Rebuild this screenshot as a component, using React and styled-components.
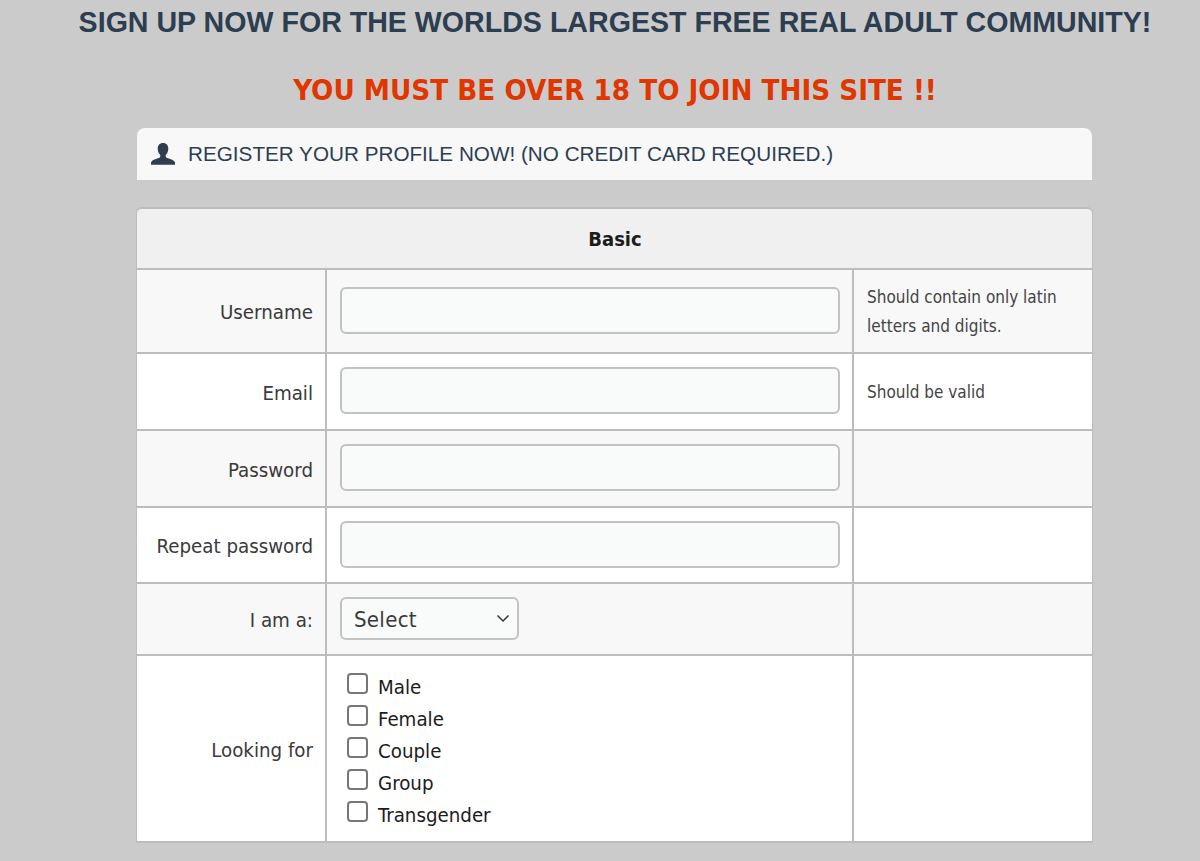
import React from "react";
import styled, { createGlobalStyle } from "styled-components";

const GlobalStyle = createGlobalStyle`
  html, body {
    margin: 0;
    padding: 0;
    background: #cbcbcb;
    height: 861px;
    overflow: hidden;
    font-family: "DejaVu Sans", Tahoma, sans-serif;
    font-stretch: condensed;
  }
`;

const Page = styled.div`
  width: 1200px;
  height: 861px;
  overflow: hidden;
`;

const Headline = styled.h1`
  margin: 0;
  height: 45px;
  padding-left: 30px;
  text-align: center;
  font-family: "Liberation Sans", Arial, sans-serif;
  font-stretch: normal;
  font-size: 28.6px;
  line-height: 45px;
  font-weight: 700;
  color: #2c3e50;
  white-space: nowrap;
`;

const Warning = styled.h2`
  margin: 23px 0 0;
  height: 45px;
  padding-left: 30px;
  text-align: center;
  font-size: 29.2px;
  line-height: 45px;
  font-weight: 700;
  color: #e03600;
  white-space: nowrap;
`;

const Content = styled.div`
  width: 957px;
  margin: 15px 0 0 136px;
`;

const Banner = styled.div`
  display: flex;
  align-items: center;
  gap: 13px;
  box-sizing: border-box;
  height: 52px;
  margin: 0 1px;
  padding: 0 0 0 14px;
  background: #f8f8f8;
  border-radius: 8px 8px 0 0;
  font-family: "Liberation Sans", Arial, sans-serif;
  font-stretch: normal;
  font-size: 20.7px;
  color: #2c3e50;
`;

const UserIcon = styled.svg`
  width: 24px;
  height: 22px;
  fill: #2c3e50;
  flex: none;
`;

const FormTable = styled.table`
  width: 957px;
  margin-top: 27px;
  border-collapse: separate;
  border-spacing: 0;
  table-layout: fixed;
  border: 2px solid #bdbdbd;
  border-width: 2px 1px;
  border-radius: 6px 6px 0 0;
  overflow: hidden;
  box-sizing: border-box;
  color: #3a3a3a;
`;

const HeadCell = styled.th`
  height: 59px;
  padding: 0 0 0 1px;
  background: #f0f0f0;
  border-bottom: 2px solid #bdbdbd;
  font-size: 20px;
  font-weight: 700;
  color: #1c1c1c;
`;

const Row = styled.tr`
  background: ${(p) => (p.$shaded ? "#f8f8f8" : "#ffffff")};
`;

const Cell = styled.td`
  box-sizing: border-box;
  padding: 0 12px 0 13px;
  height: ${(p) => p.$h}px;
  border-right: 2px solid #bdbdbd;
  border-bottom: 2px solid #bdbdbd;
  vertical-align: middle;

  &:last-child {
    border-right: 0;
  }

  tr:last-child & {
    border-bottom: 0;
  }
`;

const LabelCell = styled(Cell)`
  padding-top: 2px;
  text-align: right;
  font-size: 20.3px;
`;

const HintCell = styled(Cell)`
  padding-top: 2px;
  font-size: 17px;
  line-height: 29px;
  color: #444444;
`;

const TextInput = styled.input`
  display: block;
  box-sizing: border-box;
  width: 100%;
  height: 47px;
  margin-bottom: 2px;
  background: #f9fafa;
  border: 2px solid #c2c2c2;
  border-radius: 6px;
`;

const SelectBox = styled.select`
  display: block;
  box-sizing: border-box;
  width: 179px;
  height: 43px;
  margin-bottom: 2px;
  padding: 2px 40px 0 12px;
  background: #f9fafa url("data:image/svg+xml,%3Csvg xmlns='http://www.w3.org/2000/svg' viewBox='0 0 14 14'%3E%3Cpath d='M1.5 4.5 7 10l5.500-5.500' fill='none' stroke='%23333' stroke-width='1.500'/%3E%3C/svg%3E") no-repeat right 7px center / 14px;
  appearance: none;
  border: 2px solid #c2c2c2;
  border-radius: 6px;
  font-family: inherit;
  font-stretch: inherit;
  font-size: 22px;
  letter-spacing: 0.3px;
  color: #3a3a3a;
`;

const CheckList = styled.div`
  display: flex;
  flex-direction: column;
  padding-left: 7px;
`;

const CheckRow = styled.label`
  display: flex;
  align-items: center;
  gap: 10px;
  height: 32px;
  font-size: 20.3px;
  color: #1c1c1c;
`;

const CheckLabel = styled.span`
  padding-top: 4px;
`;

const CheckBox = styled.span`
  display: block;
  box-sizing: border-box;
  width: 21px;
  height: 21px;
  margin-top: -2px;
  background: #fff;
  border: 2px solid #777;
  border-radius: 4px;
`;

const looking = ["Male", "Female", "Couple", "Group", "Transgender"];

export default function App() {
  return (
    <Page>
      <GlobalStyle />
      <Headline>SIGN UP NOW FOR THE WORLDS LARGEST FREE REAL ADULT COMMUNITY!</Headline>
      <Warning>YOU MUST BE OVER 18 TO JOIN THIS SITE !!</Warning>
      <Content>
        <Banner>
          <UserIcon viewBox="0 0 24 22">
            <path d="M12 0c3.400 0 5.300 2.400 5.300 5.600 0 2.500-.9 4.800-2.300 6.200-.5.600-.4 2 .3 2.600 1.500 1.200 7.600 1.600 8.700 5.100V21.700H0V19.500c1.100-3.500 7.200-3.900 8.700-5.100.7-.6.8-2 .3-2.600C7.600 10.400 6.700 8.100 6.700 5.600 6.700 2.400 8.600 0 12 0z" />
          </UserIcon>
          REGISTER YOUR PROFILE NOW! (NO CREDIT CARD REQUIRED.)
        </Banner>
        <FormTable>
          <colgroup>
            <col style={{ width: 190 }} />
            <col style={{ width: 527 }} />
            <col />
          </colgroup>
          <thead>
            <tr>
              <HeadCell colSpan={3}>Basic</HeadCell>
            </tr>
          </thead>
          <tbody>
            <Row $shaded>
              <LabelCell $h={84}>Username</LabelCell>
              <Cell $h={84}><TextInput type="text" /></Cell>
              <HintCell $h={84}>Should contain only latin letters and digits.</HintCell>
            </Row>
            <Row>
              <LabelCell $h={77}>Email</LabelCell>
              <Cell $h={77}><TextInput type="text" /></Cell>
              <HintCell $h={77}>Should be valid</HintCell>
            </Row>
            <Row $shaded>
              <LabelCell $h={77}>Password</LabelCell>
              <Cell $h={77}><TextInput type="password" /></Cell>
              <HintCell $h={77} />
            </Row>
            <Row>
              <LabelCell $h={76}>Repeat password</LabelCell>
              <Cell $h={76}><TextInput type="password" /></Cell>
              <HintCell $h={76} />
            </Row>
            <Row $shaded>
              <LabelCell $h={72}>I am a:</LabelCell>
              <Cell $h={72}>
                <SelectBox defaultValue="">
                  <option value="">Select</option>
                </SelectBox>
              </Cell>
              <HintCell $h={72} />
            </Row>
            <Row>
              <LabelCell $h={185}>Looking for</LabelCell>
              <Cell $h={185}>
                <CheckList>
                  {looking.map((name) => (
                    <CheckRow key={name}>
                      <CheckBox />
                      <CheckLabel>{name}</CheckLabel>
                    </CheckRow>
                  ))}
                </CheckList>
              </Cell>
              <HintCell $h={185} />
            </Row>
          </tbody>
        </FormTable>
      </Content>
    </Page>
  );
}
